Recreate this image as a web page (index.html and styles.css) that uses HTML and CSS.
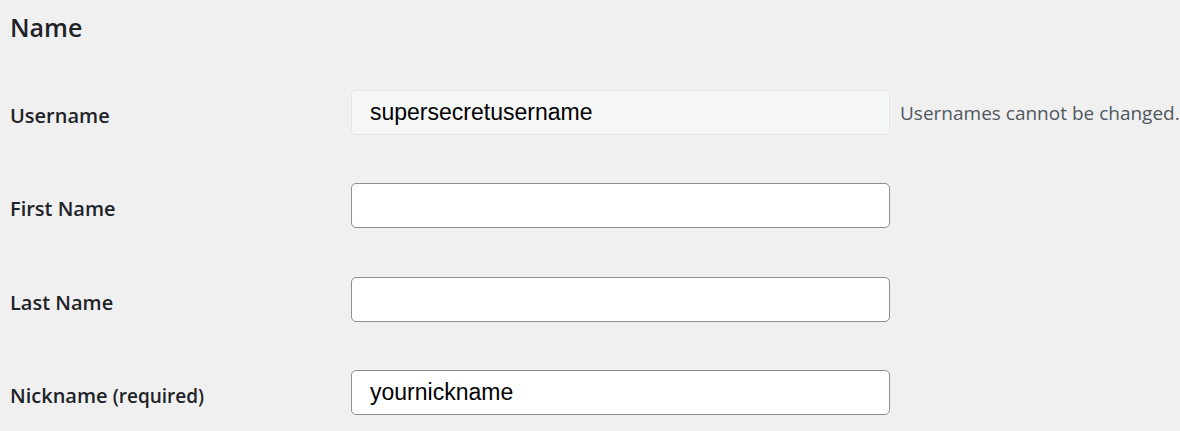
FILE: index.html
```html
<!DOCTYPE html>
<html>
<head>
<meta charset="utf-8">
<link rel="stylesheet" href="styles.css">
</head>
<body>
<div class="page">
  <h2 class="title">Name</h2>
  <div class="form">
    <label class="label">Username</label>
    <div class="field"><input class="input readonly" type="text" value="supersecretusername" readonly><span class="desc">Usernames cannot be changed.</span></div>
    <label class="label">First Name</label>
    <div class="field"><input class="input" type="text" value=""></div>
    <label class="label">Last Name</label>
    <div class="field"><input class="input" type="text" value=""></div>
    <label class="label">Nickname <span class="req">(required)</span></label>
    <div class="field"><input class="input" type="text" value="yournickname"></div>
  </div>
</div>
</body>
</html>
```
FILE: styles.css
```css
html, body {
  margin: 0;
  padding: 0;
  background: #f0f0f1;
}
.page {
  padding: 0 0 0 10px;
  font-family: "Open Sans", "Noto Sans", sans-serif;
  color: #1d2327;
}
.title {
  margin: 0;
  padding-top: 11px;
  height: 90px;
  box-sizing: border-box;
  font-size: 25px;
  font-weight: 600;
  line-height: 32px;
}
.form {
  display: grid;
  grid-template-columns: 341px 1fr;
  row-gap: 48.4px;
  align-items: center;
}
.label {
  font-size: 20px;
  font-weight: 600;
  padding-top: 6px;
}
.req {
  font-size: 19px;
}
.field {
  display: flex;
  align-items: center;
  gap: 10px;
}
.input {
  width: 539px;
  height: 45px;
  box-sizing: border-box;
  margin: 0;
  padding: 0 18px;
  border: 1px solid #8c8f94;
  border-radius: 5px;
  background: #fff;
  font-family: "Liberation Sans", Arial, sans-serif;
  font-size: 23px;
  color: #000;
  outline: none;
}
.readonly {
  background: #f6f7f7;
  border-color: #e2e4e7;
}
.desc {
  font-size: 19px;
  color: #50575e;
  white-space: nowrap;
}
```
